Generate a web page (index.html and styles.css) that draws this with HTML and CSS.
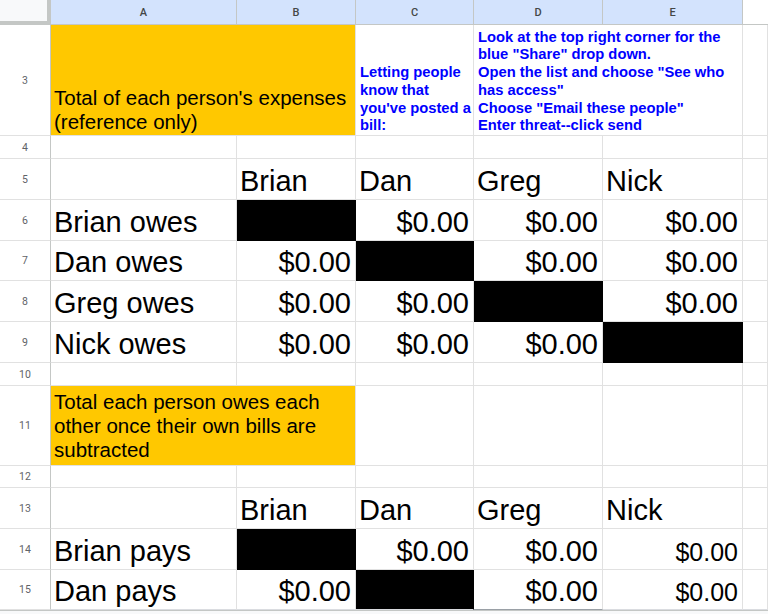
FILE: index.html
```html
<!DOCTYPE html>
<html>
<head>
<meta charset="utf-8">
<link rel="stylesheet" href="styles.css">
</head>
<body>
<div class="sheet">
  <div class="corner"></div>
  <div class="ch">A</div><div class="ch">B</div><div class="ch">C</div><div class="ch">D</div><div class="ch">E</div><div class="ch ch-blank"></div>

  <div class="rh">3</div>
  <div class="c span2 yellow note">Total of each person's expenses<br>(reference only)</div>
  <div class="c blue">Letting people<br>know that<br>you've posted a<br>bill:</div>
  <div class="c span2 blue">Look at the top right corner for the<br>blue "Share" drop down.<br>Open the list and choose "See who<br>has access"<br>Choose "Email these people"<br>Enter threat--click send</div>
  <div class="c"></div>

  <div class="rh">4</div>
  <div class="c"></div><div class="c"></div><div class="c"></div><div class="c"></div><div class="c"></div><div class="c"></div>

  <div class="rh">5</div>
  <div class="c"></div><div class="c">Brian</div><div class="c">Dan</div><div class="c">Greg</div><div class="c">Nick</div><div class="c"></div>

  <div class="rh">6</div>
  <div class="c">Brian owes</div><div class="c blk"></div><div class="c num">$0.00</div><div class="c num">$0.00</div><div class="c num">$0.00</div><div class="c"></div>

  <div class="rh">7</div>
  <div class="c">Dan owes</div><div class="c num">$0.00</div><div class="c blk"></div><div class="c num">$0.00</div><div class="c num">$0.00</div><div class="c"></div>

  <div class="rh">8</div>
  <div class="c">Greg owes</div><div class="c num">$0.00</div><div class="c num">$0.00</div><div class="c blk"></div><div class="c num">$0.00</div><div class="c"></div>

  <div class="rh">9</div>
  <div class="c">Nick owes</div><div class="c num">$0.00</div><div class="c num">$0.00</div><div class="c num">$0.00</div><div class="c blk"></div><div class="c"></div>

  <div class="rh">10</div>
  <div class="c"></div><div class="c"></div><div class="c"></div><div class="c"></div><div class="c"></div><div class="c"></div>

  <div class="rh">11</div>
  <div class="c span2 yellow note mid">Total each person owes each<br>other once their own bills are<br>subtracted</div>
  <div class="c"></div><div class="c"></div><div class="c"></div><div class="c"></div>

  <div class="rh">12</div>
  <div class="c"></div><div class="c"></div><div class="c"></div><div class="c"></div><div class="c"></div><div class="c"></div>

  <div class="rh">13</div>
  <div class="c"></div><div class="c">Brian</div><div class="c">Dan</div><div class="c">Greg</div><div class="c">Nick</div><div class="c"></div>

  <div class="rh">14</div>
  <div class="c">Brian pays</div><div class="c blk"></div><div class="c num">$0.00</div><div class="c num">$0.00</div><div class="c num small">$0.00</div><div class="c"></div>

  <div class="rh">15</div>
  <div class="c last">Dan pays</div><div class="c num last">$0.00</div><div class="c blk last"></div><div class="c num last dark">$0.00</div><div class="c num small last">$0.00</div><div class="c last"></div>

  <div class="filler"></div>
</div>
</body>
</html>
```

FILE: styles.css
```css
html, body {
  margin: 0;
  padding: 0;
  background: #ffffff;
  overflow: hidden;
}

.sheet {
  width: 768px;
  height: 614px;
  display: grid;
  grid-template-columns: 51px 186px 119px 118px 129px 140px 1fr;
  grid-template-rows: 25px 111px 23px 41px 41px 40px 41px 41px 23px 80px 22px 41px 41px 40px 1fr;
  font-family: "Liberation Sans", Arial, sans-serif;
  color: #000;
}

.corner {
  box-sizing: border-box;
  background: #f8f9fa;
  border-right: 4px solid #c4c7c5;
  border-bottom: 4px solid #c4c7c5;
}

.ch {
  box-sizing: border-box;
  background: #d3e3fd;
  border-right: 1px solid #c4c7c5;
  border-bottom: 1px solid #c4c7c5;
  display: flex;
  align-items: center;
  justify-content: center;
  font-family: Roboto, "Liberation Sans", sans-serif;
  font-weight: 500;
  font-size: 11px;
  color: #444746;
}

.ch-blank {
  background: #ffffff;
  border-right: none;
}

.rh {
  box-sizing: border-box;
  background: #ffffff;
  border-right: 1px solid #c4c7c5;
  border-bottom: 1px solid #e1e1e1;
  display: flex;
  align-items: center;
  justify-content: center;
  font-family: Roboto, "Liberation Sans", sans-serif;
  font-size: 10.5px;
  color: #5f6368;
}

.c {
  box-sizing: border-box;
  border-right: 1px solid #e1e1e1;
  border-bottom: 1px solid #e1e1e1;
  display: flex;
  align-items: flex-end;
  padding: 0 3px 1px 3px;
  overflow: hidden;
  white-space: nowrap;
  font-size: 29px;
  line-height: normal;
}

.span2 {
  grid-column: span 2;
}

.yellow {
  background: #ffc800;
}

.note {
  font-size: 20.5px;
  line-height: 24px;
  padding-bottom: 1px;
}

.mid {
  align-items: center;
  padding-bottom: 0;
}

.blue {
  color: #0000ff;
  font-weight: bold;
  font-size: 14.75px;
  line-height: 17.7px;
  padding: 0 3px 0 4px;
}

.num {
  justify-content: flex-end;
  padding-right: 4px;
}

.small {
  font-size: 25px;
  padding-bottom: 2px;
}

.blk {
  background: #000;
  border-color: #000;
}

.last {
  border-bottom-color: #dadce0;
}

.dark {
  border-bottom-color: #9aa0a6;
}

.filler {
  grid-column: 1 / -1;
  background: #f8f9fa;
  border-top: 1px solid #c4c7c5;
}
```
